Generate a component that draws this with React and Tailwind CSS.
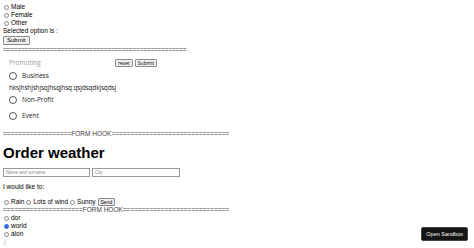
import { useState } from 'react';

function Radio({ checked, big }) {
    if (big) {
        return <span className="inline-block w-[8px] h-[8px] rounded-full border border-[#555] shrink-0" />;
    }
    return (
        <span className={`inline-block w-[5px] h-[5px] rounded-full border shrink-0 ${checked ? 'bg-[#2f6fe6] border-[#2f6fe6]' : 'border-[#888] bg-white'}`} />
    );
}

function Btn({ children, className = '' }) {
    return (
        <span className={`inline-flex items-center justify-center border border-[#8a8a8a] bg-[#efefef] rounded-[1px] px-[2px] text-[5px] leading-[7px] ${className}`}>
            {children}
        </span>
    );
}

export default function App() {
    const [gender] = useState('');
    const eq = (n) => '='.repeat(n);

    return (
        <div className="relative w-[474px] h-[248px] overflow-hidden bg-white text-black font-['Liberation_Sans',Arial,sans-serif] text-[6.5px] leading-[8px]">
            <div className="px-[3px] pt-[3px]">
                {['Male', 'Female', 'Other'].map((g) => (
                    <div key={g} className="flex items-center gap-[2px] h-[8px] pl-[1px]">
                        <Radio checked={gender === g} />
                        <span>{g}</span>
                    </div>
                ))}
                <div className="h-[8px]">Selected option is :</div>
                <div className="h-[11px] flex items-center">
                    <Btn className="h-[9px] px-[3px] text-[6px]">Submit</Btn>
                </div>
                <div className="h-[8px] text-[#444] tracking-[-0.2px]">{eq(51)}</div>
            </div>

            {/* promoting form */}
            <div className="pl-[9px] pt-[4px] font-['Open_Sans',sans-serif] text-[6.5px]">
                <div className="flex items-center h-[10px]">
                    <span className="w-[106px] text-[#999]">Promoting</span>
                    <div className="flex gap-[2px]">
                        <Btn className="h-[8px] text-[4.5px]">reset</Btn>
                        <Btn className="h-[8px] text-[4.5px]">Submit</Btn>
                    </div>
                </div>
                <div className="flex items-center gap-[5px] h-[16px]">
                    <Radio big />
                    <span className="text-[#222]">Business</span>
                </div>
                <div className="h-[8px] text-[#222] tracking-[-0.15px]">hksjhshjshjsqjhsqjhsq qsjdsqdkjsqdsj</div>
                <div className="flex items-center gap-[5px] h-[16px]">
                    <Radio big />
                    <span className="text-[#222]">Non-Profit</span>
                </div>
                <div className="flex items-center gap-[5px] h-[16px]">
                    <Radio big />
                    <span className="text-[#222]">Event</span>
                </div>
            </div>

            <div className="px-[3px] pt-[6px]">
                <div className="h-[8px] text-[#444]">{eq(18)}FORM HOOK{eq(31)}</div>
                <h1 className="font-bold text-[15px] leading-[18px] mt-[6px]">Order weather</h1>
                <div className="flex gap-[2px] mt-[6px]">
                    <span className="w-[87px] h-[9px] border border-[#999] text-[4.5px] leading-[7px] text-[#888] px-[2px]">Name and surname</span>
                    <span className="w-[88px] h-[9px] border border-[#999] text-[4.5px] leading-[7px] text-[#888] px-[2px]">City</span>
                </div>
                <div className="mt-[6px] h-[8px]">I would like to:</div>
                <div className="mt-[7px] flex items-center gap-[2px] h-[8px] pl-[1px]">
                    <Radio /><span>Rain</span>
                    <Radio /><span>Lots of wind</span>
                    <Radio /><span>Sunny</span>
                    <Btn className="h-[8px] text-[4.5px]">Send</Btn>
                </div>
                <div className="h-[8px] text-[#444]">{eq(21)}FORM HOOK{eq(28)}</div>
                {['dor', 'world', 'alon'].map((w) => (
                    <div key={w} className="flex items-center gap-[2px] h-[8px] pl-[1px]">
                        <Radio checked={w === 'world'} />
                        <span>{w}</span>
                    </div>
                ))}
                <div className="h-[8px] text-[#bbb] pl-[1px]">(</div>
            </div>

            <div className="absolute right-[6px] bottom-[7px] bg-[#151515] text-white text-[5.5px] leading-[12px] px-[4px] rounded-[2px] border border-[#444]">
                Open Sandbox
            </div>
        </div>
    );
}
